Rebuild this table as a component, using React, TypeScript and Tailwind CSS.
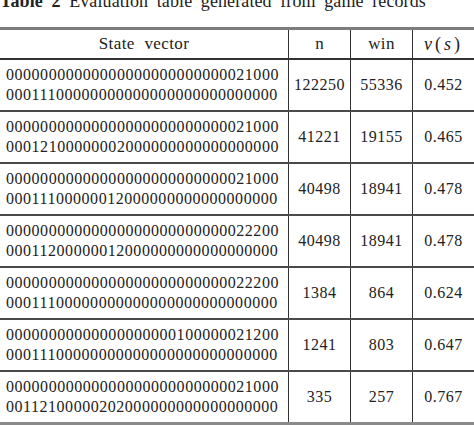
import React from "react";

const rows: [string, string, string, string, string][] = [
  ["00000000000000000000000000021000", "00011100000000000000000000000000", "122250", "55336", "0.452"],
  ["00000000000000000000000000021000", "00012100000002000000000000000000", "41221", "19155", "0.465"],
  ["00000000000000000000000000021000", "00011100000012000000000000000000", "40498", "18941", "0.478"],
  ["00000000000000000000000000022200", "00011200000012000000000000000000", "40498", "18941", "0.478"],
  ["00000000000000000000000000022200", "00011100000000000000000000000000", "1384", "864", "0.624"],
  ["00000000000000000000100000021200", "00011100000000000000000000000000", "1241", "803", "0.647"],
  ["00000000000000000000000000021000", "00112100000202000000000000000000", "335", "257", "0.767"],
];

export default function App() {
  return (
    <div className="w-[474px] h-[425px] overflow-hidden bg-white [font-family:'Liberation_Serif',serif] text-[#222]">
      <div className="-mt-[9px] mb-[16px] h-[20px] leading-[20px] text-[18px] whitespace-nowrap tracking-[0.1px] [word-spacing:4px]">
        <span className="font-bold">Table 2</span> Evaluation table generated from game records
      </div>
      <div className="border-t-[3px] border-[#7c7c7c]">
        <div className="grid grid-cols-[288px_62px_62px_1fr] h-[30px] border-b-2 border-[#333]">
          <div className="flex items-center justify-center text-[17px] tracking-[0.4px] [word-spacing:5px]">State vector</div>
          <div className="flex items-center justify-center border-l border-[#333] text-[17px]">n</div>
          <div className="flex items-center justify-center border-l border-[#333] text-[17px] tracking-[0.4px]">win</div>
          <div className="flex items-center justify-center border-l border-[#333] text-[18px] tracking-[3px]">
            <span className="italic">v</span>(<span className="italic">s</span>)
          </div>
        </div>
        {rows.map((r, i) => (
          <div
            key={i}
            className={
              i === rows.length - 1
                ? "grid grid-cols-[288px_62px_62px_1fr] h-[53px] border-b-[3px] border-[#8a8a8a]"
                : "grid grid-cols-[288px_62px_62px_1fr] h-[52px] border-b-2 border-[#4a4a4a]"
            }
          >
            <div className="flex flex-col justify-center pl-[6px] text-[16px] leading-[20px] tracking-[0.53px] whitespace-nowrap">
              <div>{r[0]}</div>
              <div>{r[1]}</div>
            </div>
            <div className="flex items-center justify-center border-l border-[#333] text-[16px] tracking-[0.5px]">{r[2]}</div>
            <div className="flex items-center justify-center border-l border-[#333] text-[16px] tracking-[0.5px]">{r[3]}</div>
            <div className="flex items-center justify-center border-l border-[#333] text-[16px] tracking-[0.5px]">{r[4]}</div>
          </div>
        ))}
      </div>
    </div>
  );
}
